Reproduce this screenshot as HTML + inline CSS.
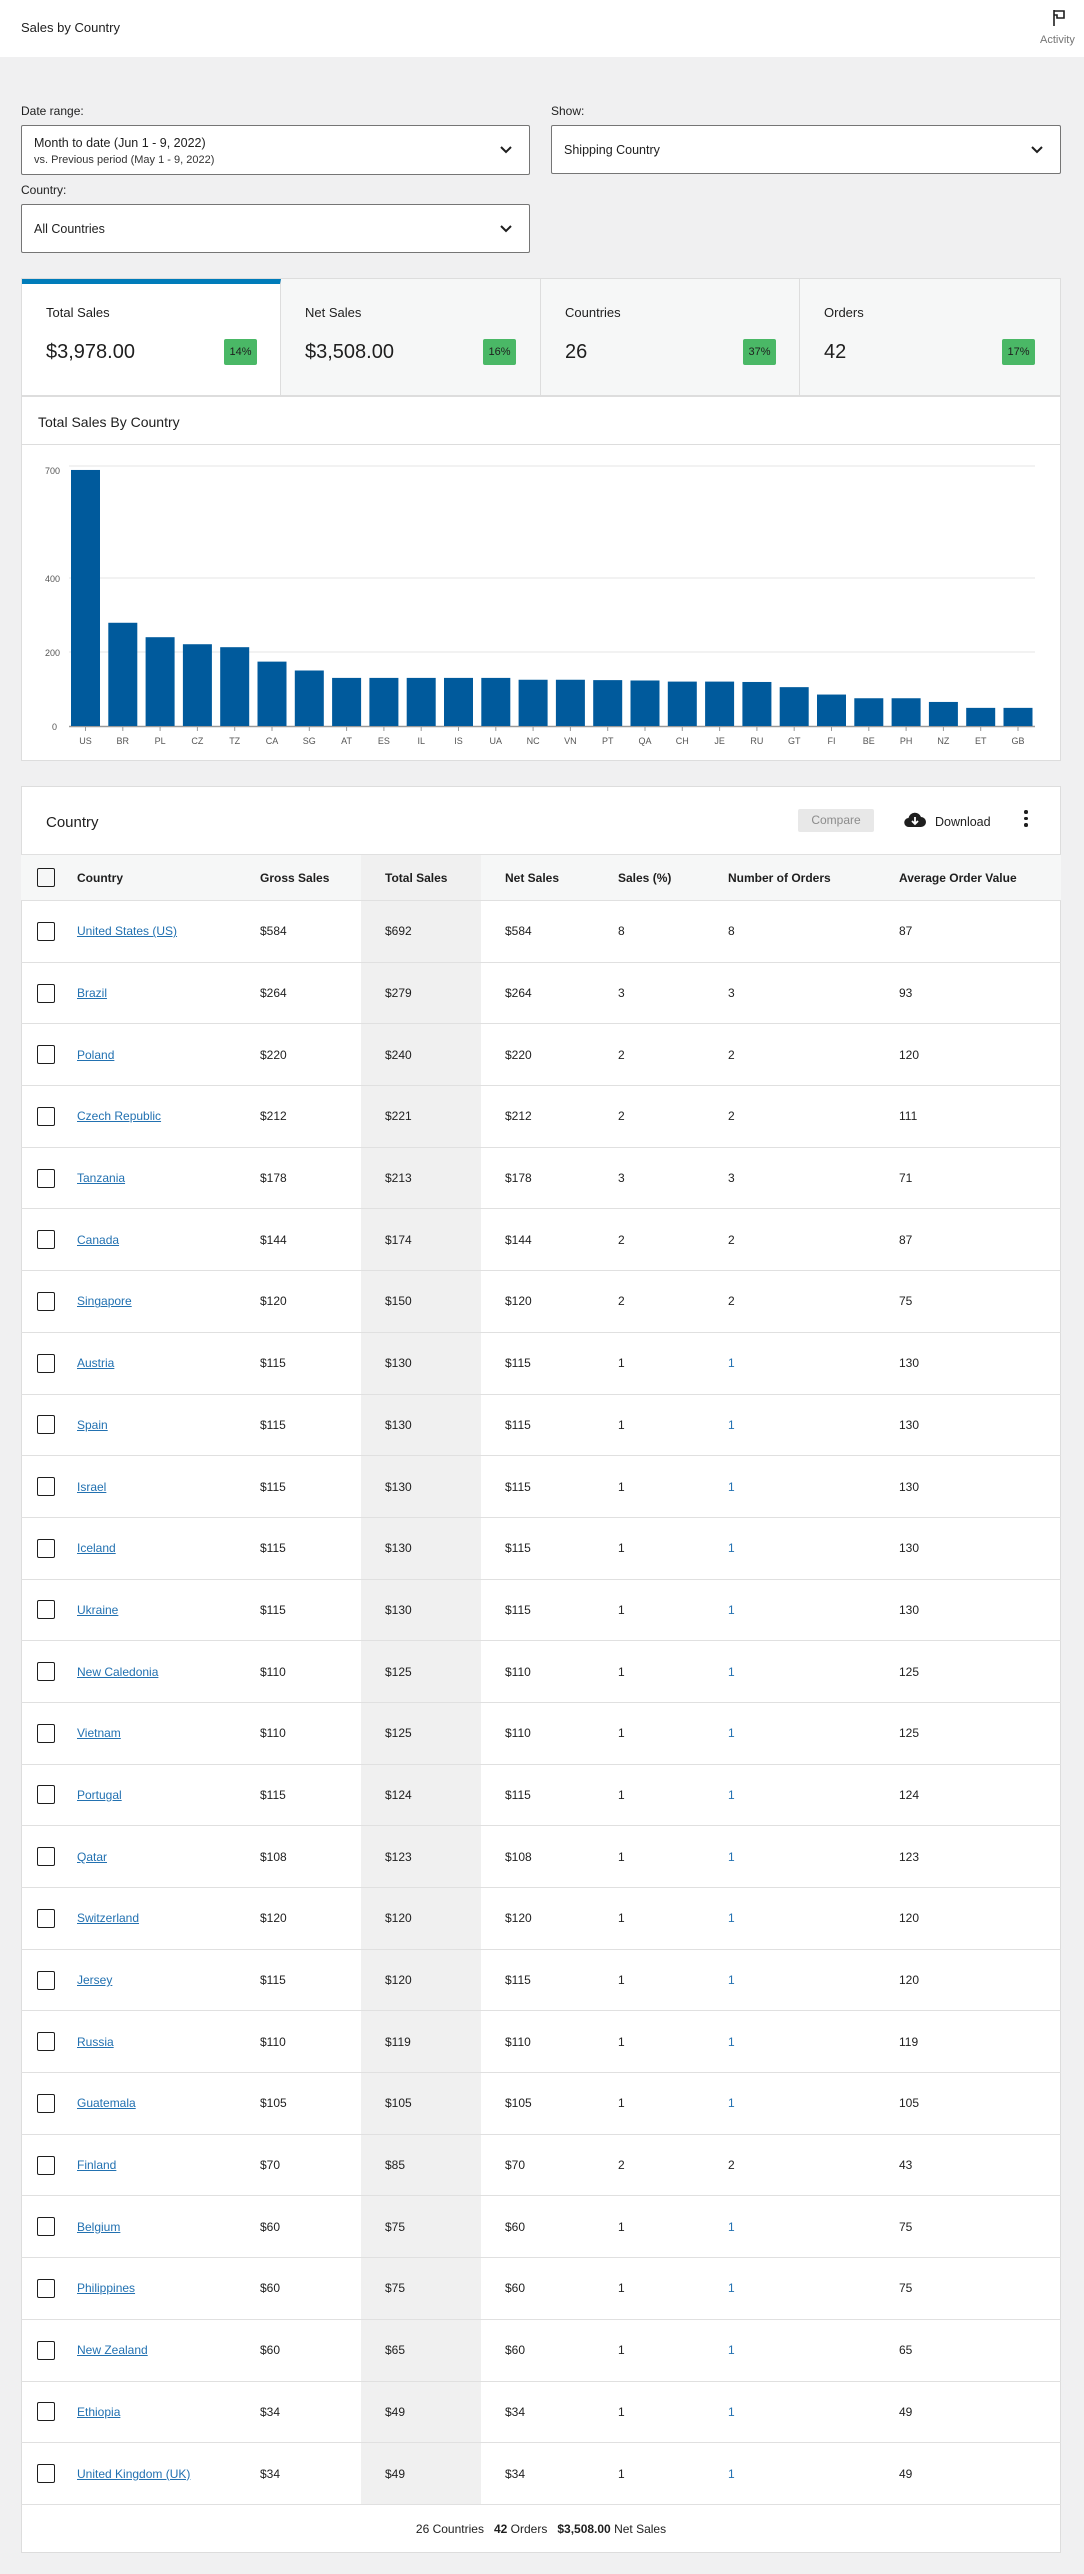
<!DOCTYPE html>
<html><head><meta charset="utf-8"><style>
*{box-sizing:border-box;margin:0;padding:0}
body{width:1084px;height:2574px;background:#f0f0f1;font-family:"Liberation Sans",sans-serif;color:#1e1e1e;position:relative;overflow:hidden}
.abs{position:absolute}
.hdr{left:0;top:0;width:1084px;height:57px;background:#fff}
.lbl{font-size:12px;color:#1e1e1e}
.sel{background:#fff;border:1px solid #757575;border-radius:2px}
.chev{position:absolute;right:16px;top:50%;margin-top:-7px}
.card{top:279px;height:116px;background:#f6f7f7;border-right:1px solid #ddd}
.card .t{position:absolute;left:24px;top:26px;font-size:13px}
.card .v{position:absolute;left:24px;top:62px;font-size:20px}
.card .b{position:absolute;left:202px;top:60px;width:33px;height:26px;background:#4ab866;border-radius:2px;font-size:11px;line-height:26px;text-align:center;color:#1e1e1e}
table{border-collapse:collapse;width:1040px;font-size:12px;table-layout:fixed}
td,th{text-align:left;padding:0;height:61.7px;border-bottom:1px solid #e0e0e0}
th{height:46px;background:#f6f7f7;font-weight:bold;font-size:12px}
td.p,th.p{padding-left:24px}
.tc{background:#f0f0f0}
.cb{display:inline-block;width:18px;height:19px;border:1.5px solid #1e1e1e;border-radius:2px;vertical-align:middle}
a{color:#2271b1;text-decoration:underline}
.bl{color:#2271b1}
</style></head><body>
<div class="abs hdr"></div>
<div class="abs" style="left:21px;top:20px;font-size:13px">Sales by Country</div>
<svg class="abs" style="left:1052px;top:9px" width="16" height="18" viewBox="0 0 16 18"><path d="M2 1v16M2 2h10v7H5v-3h-3" fill="none" stroke="#1e1e1e" stroke-width="1.6"/></svg>
<div class="abs" style="left:1040px;top:34px;font-size:11px;color:#757575">Activity</div>

<div class="abs lbl" style="left:21px;top:104px">Date range:</div>
<div class="abs sel" style="left:21px;top:125px;width:509px;height:50px">
<div style="position:absolute;left:12px;top:10px;font-size:12.5px">Month to date (Jun 1 - 9, 2022)</div>
<div style="position:absolute;left:12px;top:28px;font-size:11px;color:#333">vs. Previous period (May 1 - 9, 2022)</div>
<svg class="chev" width="14" height="14" viewBox="0 0 14 14"><path d="M2 4l5 5 5-5" fill="none" stroke="#1e1e1e" stroke-width="2"/></svg></div>
<div class="abs lbl" style="left:551px;top:104px">Show:</div>
<div class="abs sel" style="left:551px;top:125px;width:510px;height:49px">
<div style="position:absolute;left:12px;top:17px;font-size:12.5px">Shipping Country</div>
<svg class="chev" width="14" height="14" viewBox="0 0 14 14"><path d="M2 4l5 5 5-5" fill="none" stroke="#1e1e1e" stroke-width="2"/></svg></div>
<div class="abs lbl" style="left:21px;top:183px">Country:</div>
<div class="abs sel" style="left:21px;top:204px;width:509px;height:49px">
<div style="position:absolute;left:12px;top:17px;font-size:12.5px">All Countries</div>
<svg class="chev" width="14" height="14" viewBox="0 0 14 14"><path d="M2 4l5 5 5-5" fill="none" stroke="#1e1e1e" stroke-width="2"/></svg></div>

<div class="abs" style="left:21px;top:278px;width:1040px;height:118px;border:1px solid #ddd;background:#f6f7f7"></div>
<div class="abs card" style="left:22px;width:259px;background:#fff;border-top:5px solid #007cba"><div class="t" style="top:21px">Total Sales</div><div class="v" style="top:57px">$3,978.00</div><div class="b" style="top:55px">14%</div></div>
<div class="abs card" style="left:281px;width:260px"><div class="t">Net Sales</div><div class="v">$3,508.00</div><div class="b">16%</div></div>
<div class="abs card" style="left:541px;width:259px"><div class="t">Countries</div><div class="v">26</div><div class="b">37%</div></div>
<div class="abs card" style="left:800px;width:260px;border-right:none"><div class="t">Orders</div><div class="v">42</div><div class="b">17%</div></div>

<div class="abs" style="left:21px;top:396px;width:1040px;height:365px;background:#fff;border:1px solid #ddd"></div>
<div class="abs" style="left:21px;top:444px;width:1040px;height:1px;background:#ddd"></div>
<div class="abs" style="left:38px;top:414px;font-size:14px">Total Sales By Country</div>
<svg class="abs" style="left:0;top:0" width="1084" height="780">
<g stroke="#e6e6e6" stroke-width="1"><line x1="69" x2="1035" y1="466" y2="466"/><line x1="69" x2="1035" y1="578" y2="578"/><line x1="69" x2="1035" y1="652" y2="652"/></g>
<line x1="69" x2="1035" y1="726.5" y2="726.5" stroke="#999" stroke-width="1.5"/>
<g font-family="Liberation Sans" font-size="9" fill="#555"><text x="45" y="474">700</text><text x="45" y="582">400</text><text x="45" y="656">200</text><text x="52" y="730">0</text></g>
<g id="bars" fill="#005a9c"></g>
<g id="xl" font-family="Liberation Sans" font-size="9" fill="#555" text-anchor="middle"></g>
</svg>
<script>
var v=[692,279,240,221,213,174,150,130,130,130,130,130,125,125,124,123,120,120,119,105,85,75,75,65,49,49];
var c="US BR PL CZ TZ CA SG AT ES IL IS UA NC VN PT QA CH JE RU GT FI BE PH NZ ET GB".split(" ");
var b="",l="";
for(var i=0;i<26;i++){var x=71+i*37.3,h=v[i]*0.37;b+='<rect x="'+x+'" y="'+(726-h)+'" width="29" height="'+h+'"/>';l+='<text x="'+(x+14.5)+'" y="744">'+c[i]+'</text><line x1="'+(x+14.5)+'" x2="'+(x+14.5)+'" y1="727" y2="731" stroke="#999"/>';}
document.getElementById("bars").innerHTML=b;document.getElementById("xl").innerHTML=l;
</script>

<div class="abs" style="left:21px;top:786px;width:1040px;height:1767px;background:#fff;border:1px solid #ddd">
<div style="position:absolute;left:24px;top:27px;font-size:15px">Country</div>
<div style="position:absolute;left:776px;top:22px;width:76px;height:23px;background:#e8e8e8;color:#8c8c8c;font-size:12px;line-height:23px;text-align:center;border-radius:2px">Compare</div>
<svg style="position:absolute;left:882px;top:24px" width="22" height="18" viewBox="0 0 22 18"><path d="M5 16a4.5 4.5 0 0 1-.5-9A6.5 6.5 0 0 1 17 6a5 5 0 0 1 0 10z" fill="#1e1e1e"/><path d="M11 6v7M8 10l3 3 3-3" stroke="#fff" stroke-width="1.8" fill="none"/></svg>
<div style="position:absolute;left:913px;top:28px;font-size:12.5px">Download</div>
<div style="position:absolute;left:1002px;top:23px;width:4px"><div style="width:3.5px;height:3.5px;border-radius:50%;background:#1e1e1e;margin-bottom:3px"></div><div style="width:3.5px;height:3.5px;border-radius:50%;background:#1e1e1e;margin-bottom:3px"></div><div style="width:3.5px;height:3.5px;border-radius:50%;background:#1e1e1e"></div></div>
<table style="position:absolute;left:-1px;top:67px;width:1040px;border-top:1px solid #e0e0e0" id="tb">
<colgroup><col style="width:56px"><col style="width:183px"><col style="width:101px"><col style="width:120px"><col style="width:113px"><col style="width:110px"><col style="width:171px"><col style="width:186px"></colgroup>
<tr><th style="padding-left:16px"><span class="cb"></span></th><th>Country</th><th>Gross Sales</th><th class="tc p">Total Sales</th><th class="p">Net Sales</th><th class="p">Sales (%)</th><th class="p">Number of Orders</th><th class="p">Average Order Value</th></tr>
</table>
<div style="position:absolute;left:0;top:1735px;width:1038px;text-align:center;font-size:12px">26 <span>Countries</span>&nbsp;&nbsp;&nbsp;<b>42</b> Orders&nbsp;&nbsp;&nbsp;<b>$3,508.00</b> Net Sales</div>
</div>
<script>
var rows=[["United States (US)",584,692,8,8,87],["Brazil",264,279,3,3,93],["Poland",220,240,2,2,120],["Czech Republic",212,221,2,2,111],["Tanzania",178,213,3,3,71],["Canada",144,174,2,2,87],["Singapore",120,150,2,2,75],["Austria",115,130,1,1,130],["Spain",115,130,1,1,130],["Israel",115,130,1,1,130],["Iceland",115,130,1,1,130],["Ukraine",115,130,1,1,130],["New Caledonia",110,125,1,1,125],["Vietnam",110,125,1,1,125],["Portugal",115,124,1,1,124],["Qatar",108,123,1,1,123],["Switzerland",120,120,1,1,120],["Jersey",115,120,1,1,120],["Russia",110,119,1,1,119],["Guatemala",105,105,1,1,105],["Finland",70,85,2,2,43],["Belgium",60,75,1,1,75],["Philippines",60,75,1,1,75],["New Zealand",60,65,1,1,65],["Ethiopia",34,49,1,1,49],["United Kingdom (UK)",34,49,1,1,49]];
var h="";rows.forEach(function(r){h+='<tr><td style="padding-left:16px"><span class="cb"></span></td><td><a>'+r[0]+'</a></td><td>$'+r[1]+'</td><td class="tc p">$'+r[2]+'</td><td class="p">$'+r[1]+'</td><td class="p">'+r[3]+'</td><td class="p'+(r[4]==1?' bl':'')+'">'+r[4]+'</td><td class="p">'+r[5]+'</td></tr>';});
document.getElementById("tb").insertAdjacentHTML("beforeend",h);
</script>
</body></html>
